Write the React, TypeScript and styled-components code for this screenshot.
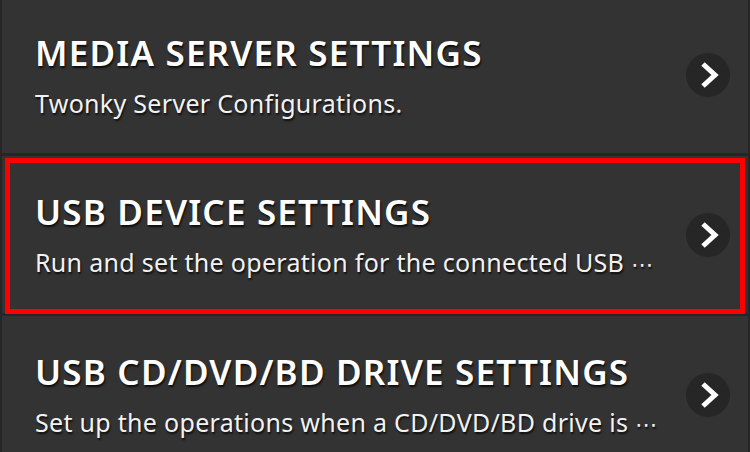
import React from "react";
import styled, { createGlobalStyle } from "styled-components";

const Global = createGlobalStyle`
  html, body {
    margin: 0;
    padding: 0;
    background: #262626;
    overflow: hidden;
  }
  body {
    font-family: "Noto Sans", "Noto Sans CJK JP", sans-serif;
  }
`;

const List = styled.div`
  display: flex;
  flex-direction: column;
  gap: 3px;
  padding: 0 2px;
  margin-top: -4px;
`;

const Item = styled.div<{ $selected?: boolean }>`
  position: relative;
  height: 157px;
  flex-shrink: 0;
  background: #333333;
  display: flex;
  align-items: center;
  padding: 0 18px 0 33px;
  box-sizing: border-box;
  ${(p) =>
    p.$selected &&
    `
    &::after {
      content: "";
      position: absolute;
      left: 3px;
      right: 3px;
      top: 2px;
      bottom: -1px;
      border: 5px solid #ff0000;
      pointer-events: none;
    }
  `}
`;

const TextCol = styled.div`
  flex: 1;
  min-width: 0;
  display: flex;
  flex-direction: column;
  gap: 15px;
  padding-top: 2px;
`;

const Title = styled.div`
  font-size: 35px;
  line-height: 40px;
  font-weight: 600;
  letter-spacing: 1.2px;
  color: #ffffff;
  white-space: nowrap;
  text-shadow: 1px 2px 2px rgba(0, 0, 0, 0.75);
`;

const Subtitle = styled.div`
  font-size: 25px;
  line-height: 30px;
  font-weight: 400;
  letter-spacing: 0.3px;
  color: #f2f2f2;
  white-space: nowrap;
  text-shadow: 1px 2px 2px rgba(0, 0, 0, 0.75);
`;

const Dots = styled.span`
  font-family: "DejaVu Sans", sans-serif;
  font-size: 22px;
  letter-spacing: 0;
`;

const ChevronButton = styled.div`
  width: 44px;
  height: 44px;
  flex-shrink: 0;
  border-radius: 50%;
  background: #262626;
  display: flex;
  align-items: center;
  justify-content: center;
`;

const Chevron = () => (
  <ChevronButton>
    <svg width="44" height="44" viewBox="0 0 44 44">
      <path
        d="M17 11 L29 22 L17 33"
        fill="none"
        stroke="#ffffff"
        strokeWidth="5"
        strokeLinejoin="miter"
      />
    </svg>
  </ChevronButton>
);

const items = [
  {
    title: "MEDIA SERVER SETTINGS",
    sub: "Twonky Server Configurations.",
    more: false,
  },
  {
    title: "USB DEVICE SETTINGS",
    sub: "Run and set the operation for the connected USB ",
    more: true,
    selected: true,
  },
  {
    title: "USB CD/DVD/BD DRIVE SETTINGS",
    sub: "Set up the operations when a CD/DVD/BD drive is ",
    more: true,
  },
];

export default function App() {
  return (
    <>
      <Global />
      <List>
        {items.map((it) => (
          <Item key={it.title} $selected={it.selected}>
            <TextCol>
              <Title>{it.title}</Title>
              <Subtitle>
                {it.sub}
                {it.more && <Dots>⋯</Dots>}
              </Subtitle>
            </TextCol>
            <Chevron />
          </Item>
        ))}
      </List>
    </>
  );
}
